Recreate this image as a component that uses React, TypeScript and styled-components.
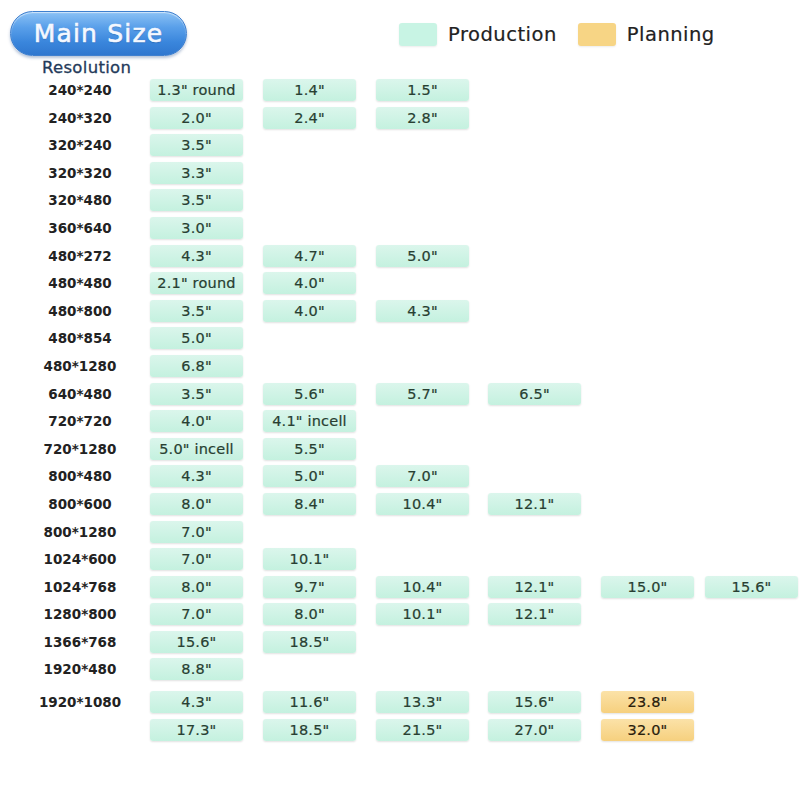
import React from "react";
import styled, { createGlobalStyle } from "styled-components";

const Global = createGlobalStyle`
  html, body { margin: 0; padding: 0; background: #ffffff; }
  body { font-family: "DejaVu Sans", Verdana, sans-serif; }
`;

const Page = styled.div`
  width: 800px;
  height: 800px;
  background: #ffffff;
  overflow: hidden;
`;

const Header = styled.header`
  display: flex;
  align-items: center;
  padding: 11px 0 0 10px;
`;

const TitlePill = styled.div`
  width: 177px;
  height: 45px;
  box-sizing: border-box;
  border-radius: 23px;
  background: linear-gradient(180deg, #8cc2f5 0%, #5aa0ea 35%, #3a86dc 70%, #2f77cf 100%);
  border: 1px solid #3f80cf;
  box-shadow: 0 2px 3px rgba(40, 80, 140, 0.35), inset 0 1px 1px rgba(255, 255, 255, 0.6);
  display: flex;
  align-items: center;
  justify-content: center;
  color: #f4f8ff;
  font-family: "DejaVu Sans", sans-serif;
  font-size: 25px;
  letter-spacing: 1.2px;
  -webkit-text-stroke: 0.6px #f4f8ff;
  text-shadow: 0 1px 1px rgba(20, 60, 120, 0.35);
`;

const Legend = styled.div`
  display: flex;
  align-items: center;
  margin-left: 212px;
  margin-top: 2px;
`;

const LegendItem = styled.div`
  display: flex;
  align-items: center;
  gap: 11px;
  margin-right: 21px;
  font-family: "DejaVu Sans", sans-serif;
  font-size: 19.5px;
  letter-spacing: 0.5px;
  color: #222222;
  -webkit-text-stroke: 0.2px #222222;
`;

const Swatch = styled.span<{ $planned?: boolean }>`
  display: block;
  width: 38px;
  height: 23px;
  border-radius: 3px;
  background: ${(p) => (p.$planned ? "#f7d585" : "#c8f4e4")};
  box-shadow: 0 1px 2px rgba(0, 0, 0, 0.08);
`;

const ResolutionTitle = styled.div`
  margin: 3px 0 0 42px;
  height: 18px;
  line-height: 18px;
  font-size: 16.5px;
  color: #243a5a;
  letter-spacing: 0.3px;
  -webkit-text-stroke: 0.3px #243a5a;
`;

const Table = styled.div`
  display: flex;
  flex-direction: column;
  gap: 5.6px;
  margin-top: 2px;
`;

const Row = styled.div<{ $spaced?: boolean }>`
  display: grid;
  grid-template-columns: 150px 113px 113px 112px 113px 104px 95px;
  height: 22px;
  align-items: center;
  margin-top: ${(p) => (p.$spaced ? "5px" : "0")};
`;

const Label = styled.div`
  padding-left: 10px;
  text-align: center;
  font-weight: bold;
  font-size: 13.5px;
  color: #222222;
  white-space: nowrap;
`;

const Cell = styled.div<{ $planned?: boolean }>`
  width: 93px;
  height: 22px;
  box-sizing: border-box;
  border-radius: 3px;
  background: ${(p) =>
    p.$planned
      ? "linear-gradient(180deg, #fbe2a8 0%, #f6d07e 100%)"
      : "linear-gradient(180deg, #dbf6ec 0%, #c4f1df 100%)"};
  box-shadow: 0 1px 2px rgba(0, 0, 0, 0.12);
  display: flex;
  align-items: center;
  justify-content: center;
  font-size: 14.5px;
  letter-spacing: 0.2px;
  color: ${(p) => (p.$planned ? "#2a200c" : "#283f32")};
  -webkit-text-stroke: 0.2px ${(p) => (p.$planned ? "#2a200c" : "#283f32")};
  white-space: nowrap;
`;

type Item = string | { v: string; p: true };

const rows: { r: string; c: Item[]; spaced?: boolean }[] = [
  { r: "240*240", c: ['1.3" round', '1.4"', '1.5"'] },
  { r: "240*320", c: ['2.0"', '2.4"', '2.8"'] },
  { r: "320*240", c: ['3.5"'] },
  { r: "320*320", c: ['3.3"'] },
  { r: "320*480", c: ['3.5"'] },
  { r: "360*640", c: ['3.0"'] },
  { r: "480*272", c: ['4.3"', '4.7"', '5.0"'] },
  { r: "480*480", c: ['2.1" round', '4.0"'] },
  { r: "480*800", c: ['3.5"', '4.0"', '4.3"'] },
  { r: "480*854", c: ['5.0"'] },
  { r: "480*1280", c: ['6.8"'] },
  { r: "640*480", c: ['3.5"', '5.6"', '5.7"', '6.5"'] },
  { r: "720*720", c: ['4.0"', '4.1" incell'] },
  { r: "720*1280", c: ['5.0" incell', '5.5"'] },
  { r: "800*480", c: ['4.3"', '5.0"', '7.0"'] },
  { r: "800*600", c: ['8.0"', '8.4"', '10.4"', '12.1"'] },
  { r: "800*1280", c: ['7.0"'] },
  { r: "1024*600", c: ['7.0"', '10.1"'] },
  { r: "1024*768", c: ['8.0"', '9.7"', '10.4"', '12.1"', '15.0"', '15.6"'] },
  { r: "1280*800", c: ['7.0"', '8.0"', '10.1"', '12.1"'] },
  { r: "1366*768", c: ['15.6"', '18.5"'] },
  { r: "1920*480", c: ['8.8"'] },
  { r: "1920*1080", c: ['4.3"', '11.6"', '13.3"', '15.6"', { v: '23.8"', p: true }], spaced: true },
  { r: "", c: ['17.3"', '18.5"', '21.5"', '27.0"', { v: '32.0"', p: true }] },
];

export default function App() {
  return (
    <Page>
      <Global />
      <Header>
        <TitlePill>Main Size</TitlePill>
        <Legend>
          <LegendItem>
            <Swatch />
            Production
          </LegendItem>
          <LegendItem>
            <Swatch $planned />
            Planning
          </LegendItem>
        </Legend>
      </Header>
      <ResolutionTitle>Resolution</ResolutionTitle>
      <Table>
        {rows.map((row, i) => (
          <Row key={i} $spaced={row.spaced}>
            <Label>{row.r}</Label>
            {row.c.map((c, j) =>
              typeof c === "string" ? (
                <Cell key={j}>{c}</Cell>
              ) : (
                <Cell key={j} $planned>
                  {c.v}
                </Cell>
              )
            )}
          </Row>
        ))}
      </Table>
    </Page>
  );
}
